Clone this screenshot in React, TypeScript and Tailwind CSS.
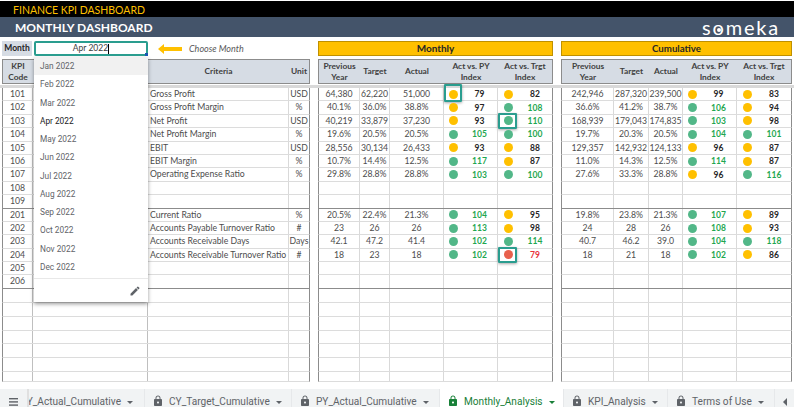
import React from "react";

type Idx = { c: "y" | "g" | "r"; v: number; box?: string };

const y = (v: number): Idx => ({ c: "y", v });
const g = (v: number): Idx => ({ c: "g", v });

const rows: any[] = [
  { code: 101, name: "Gross Profit", unit: "USD", m: ["64,380", "62,220", "51,000"], mi: [{ ...y(79), box: "first" }, y(82)], cu: ["242,946", "287,320", "239,500"], ci: [y(99), y(83)] },
  { code: 102, name: "Gross Profit Margin", unit: "%", m: ["40.1%", "36.0%", "38.8%"], mi: [y(97), g(108)], cu: ["36.6%", "41.2%", "38.7%"], ci: [g(106), y(94)] },
  { code: 103, name: "Net Profit", unit: "USD", m: ["40,219", "33,879", "37,230"], mi: [y(93), { ...g(110), box: "mid" }], cu: ["168,939", "179,043", "174,835"], ci: [g(103), y(98)] },
  { code: 104, name: "Net Profit Margin", unit: "%", m: ["19.6%", "20.5%", "20.5%"], mi: [g(105), g(100)], cu: ["19.7%", "20.3%", "20.5%"], ci: [g(104), g(101)] },
  { code: 105, name: "EBIT", unit: "USD", m: ["28,556", "30,134", "26,433"], mi: [y(93), y(88)], cu: ["129,357", "142,932", "124,133"], ci: [y(96), y(87)] },
  { code: 106, name: "EBIT Margin", unit: "%", m: ["10.7%", "14.4%", "12.5%"], mi: [g(117), y(87)], cu: ["11.0%", "14.3%", "12.5%"], ci: [g(114), y(87)] },
  { code: 107, name: "Operating Expense Ratio", unit: "%", m: ["29.8%", "28.8%", "28.8%"], mi: [g(103), g(100)], cu: ["27.6%", "33.3%", "28.8%"], ci: [y(96), g(116)] },
  { code: 108 },
  { code: 109, dark: true },
  { code: 201, name: "Current Ratio", unit: "%", m: ["20.5%", "22.4%", "21.3%"], mi: [g(104), y(95)], cu: ["19.8%", "23.8%", "21.3%"], ci: [g(107), y(89)] },
  { code: 202, name: "Accounts Payable Turnover Ratio", unit: "#", m: ["23", "26", "26"], mi: [g(113), y(98)], cu: ["24", "28", "26"], ci: [g(108), y(93)] },
  { code: 203, name: "Accounts Receivable Days", unit: "Days", m: ["42.1", "47.2", "41.4"], mi: [g(102), g(114)], cu: ["40.7", "46.2", "39.0"], ci: [g(104), g(118)] },
  { code: 204, name: "Accounts Receivable Turnover Ratio", unit: "#", m: ["18", "23", "18"], mi: [g(102), { c: "r", v: 79, box: "mid" }], cu: ["18", "21", "18"], ci: [g(102), y(86)] },
  { code: 205 },
  { code: 206, dark: true },
];

const months = ["Jan 2022", "Feb 2022", "Mar 2022", "Apr 2022", "May 2022", "Jun 2022", "Jul 2022", "Aug 2022", "Sep 2022", "Oct 2022", "Nov 2022", "Dec 2022"];

function Highlight({ kind }: { kind: string }) {
  return (
    <span
      className={
        kind === "first"
          ? "absolute left-0 -top-[4px] w-[18px] h-[18px] border-2 border-[#2a9d8f] rounded-[1px] shadow-[0_1px_3px_rgba(0,0,0,0.35)]"
          : "absolute left-0 -top-[2px] w-[19px] h-[16px] border-2 border-[#2a9d8f] rounded-[1px] shadow-[0_1px_3px_rgba(0,0,0,0.35)]"
      }
    />
  );
}

function IndexCell({ idx, width, right }: { idx?: Idx; width: string; right?: boolean }) {
  const dot = idx?.c === "y" ? "bg-[#ffc000]" : idx?.c === "g" ? "bg-[#52b788]" : "bg-[#e8604c]";
  const txt = idx?.c === "y" ? "text-[#262626]" : idx?.c === "g" ? "text-[#1fa750]" : "text-[#e8303a]";
  return (
    <div className={`${width} relative flex items-center h-full ${right ? "" : "border-r border-[#d9d9d9]"}`}>
      {idx && (
        <>
          <span className={`${right ? "w-[20px]" : "w-[18px]"} flex justify-center`}>
            <span className={`w-[9px] h-[9px] rounded-full ${dot}`} />
          </span>
          <span className={`flex-1 text-center font-bold text-[8.5px] ${txt}`}>{idx.v}</span>
          {idx.box && <Highlight kind={idx.box} />}
        </>
      )}
    </div>
  );
}

function ValueCell({ v, width }: { v?: string; width: string }) {
  return <div className={`${width} h-full text-center border-r border-[#d9d9d9] whitespace-nowrap`}>{v}</div>;
}

function DataRow({ r, height = "h-[13.4px]" }: { r: any; height?: string }) {
  const line = r.dark ? "border-b-[#8c8c8c]" : "border-b-[#dcdcdc]";
  return (
    <div className={`flex ${height} text-[8.7px] leading-[12px] text-[#4d4d4d]`}>
      <div className={`ml-[2px] w-[308px] flex h-full border-x border-x-[#8c8c8c] border-b ${line}`}>
        <div className="w-[30px] text-center border-r border-[#bfbfbf] h-full">{r.code}</div>
        <div className="w-[115px] border-r border-[#bfbfbf] h-full" />
        <div className="w-[141px] pl-[2px] border-r border-[#d9d9d9] h-full whitespace-nowrap">{r.name}</div>
        <div className="flex-1 text-center h-full">{r.unit}</div>
      </div>
      <div className={`ml-[8px] w-[235px] flex h-full border-x border-x-[#8c8c8c] border-b ${line}`}>
        <ValueCell v={r.m?.[0]} width="w-[41px]" />
        <ValueCell v={r.m?.[1]} width="w-[30px]" />
        <ValueCell v={r.m?.[2]} width="w-[54px]" />
        <IndexCell idx={r.mi?.[0]} width="w-[54px]" />
        <IndexCell idx={r.mi?.[1]} width="flex-1" right />
      </div>
      <div className={`ml-[8px] w-[231px] flex h-full border-x border-x-[#8c8c8c] border-b ${line}`}>
        <ValueCell v={r.cu?.[0]} width="w-[52px]" />
        <ValueCell v={r.cu?.[1]} width="w-[35px]" />
        <ValueCell v={r.cu?.[2]} width="w-[34px]" />
        <IndexCell idx={r.ci?.[0]} width="w-[54px]" />
        <IndexCell idx={r.ci?.[1]} width="flex-1" right />
      </div>
    </div>
  );
}

function HeadCell({ children, width }: { children: React.ReactNode; width: string }) {
  return <div className={`${width} text-center leading-[11px]`}>{children}</div>;
}

function LockIcon() {
  return (
    <svg width="12" height="12" viewBox="0 0 24 24" fill="currentColor" className="shrink-0">
      <path d="M18 8h-1V6c0-2.76-2.24-5-5-5S7 3.24 7 6v2H6c-1.1 0-2 .9-2 2v10c0 1.1.9 2 2 2h12c1.1 0 2-.9 2-2V10c0-1.1-.9-2-2-2zm-6 9c-1.1 0-2-.9-2-2s.9-2 2-2 2 .9 2 2-.9 2-2 2zm3.1-9H8.9V6c0-1.71 1.39-3.1 3.1-3.1 1.71 0 3.1 1.39 3.1 3.1v2z" />
    </svg>
  );
}

function Tab({ label, active, width, clip }: { label: string; active?: boolean; width: string; clip?: boolean }) {
  return (
    <div
      className={`${width} h-full flex items-end overflow-hidden border-r border-[#e6e8ea] ${clip ? "justify-end pr-[11px]" : "pl-[7px]"} ${
        active ? "bg-white text-[#188038]" : "text-[#5f6368]"
      }`}
    >
      {!clip && <LockIcon />}
      <span className={`${clip ? "" : "ml-[5px]"} leading-[10px] whitespace-nowrap`}>{label}</span>
      <span className="ml-[6px] mb-[3px] w-0 h-0 border-x-[3px] border-x-transparent border-t-[3px] border-t-current shrink-0" />
    </div>
  );
}

export default function App() {
  return (
    <div className="relative w-[794px] h-[407px] overflow-hidden bg-white font-['Lato',sans-serif]">
      {/* title bars */}
      <div className="mt-px h-[16px] bg-black text-[#ffc000] text-[10.5px] leading-[18px] pl-[13px]">FINANCE KPI DASHBOARD</div>
      <div className="h-[20px] bg-[#44546a] flex items-center justify-between pl-[15px] pr-[14px] text-white">
        <span className="text-[12px] font-bold pt-[2px]">MONTHLY DASHBOARD</span>
        <span className="text-[20px] leading-[20px] tracking-[1.8px]">
          s
          <span className="relative">
            o
            <span className="absolute left-[4px] top-[13px] w-[4px] h-[4px] rounded-full bg-white" />
          </span>
          meka
        </span>
      </div>

      {/* month picker and section titles */}
      <div className="mt-[4px] h-[15px] flex text-[9.5px]">
        <div className="ml-[2px] w-[30px] bg-[#d6dce4] text-[#262626] text-[8.5px] font-bold text-center leading-[15px]">Month</div>
        <div className="ml-[2px] w-[114px] relative border-2 border-[#2a9d8f] rounded-[2px] text-center text-[8.5px] text-[#404040] leading-[11px] z-20 bg-white">
          Apr 2022<span className="inline-block w-px h-[10px] bg-black align-middle" />
          <span className="absolute -right-[2px] -bottom-[2px] w-[3px] h-[3px] bg-[#1a56b0]" />
        </div>
        <div className="w-[170px] flex items-center pl-[10px]">
          <span className="w-[18px] h-[4px] bg-[#ffc000] relative ml-[6px]">
            <span className="absolute -left-[6px] -top-[3px] w-0 h-0 border-y-[5px] border-y-transparent border-r-[6px] border-r-[#ffc000]" />
          </span>
          <span className="ml-[7px] italic text-[9px] text-[#595959]">Choose Month</span>
        </div>
        <div className="w-[235px] bg-[#ffc000] border border-[#bf9000] text-center font-bold text-[#262626] text-[10px] leading-[13px]">Monthly</div>
        <div className="ml-[8px] w-[231px] bg-[#ffc000] border border-[#bf9000] text-center font-bold text-[#262626] text-[9.7px] leading-[13px]">Cumulative</div>
      </div>

      {/* column headers */}
      <div className="mt-[3px] h-[25px] flex text-[8.4px] font-bold text-[#404040]">
        <div className="ml-[2px] w-[308px] flex items-center bg-[#d6dce4] border border-[#8c8c8c]">
          <HeadCell width="w-[30px]">KPI<br />Code</HeadCell>
          <div className="w-[115px]" />
          <HeadCell width="w-[141px]">Criteria</HeadCell>
          <HeadCell width="flex-1">Unit</HeadCell>
        </div>
        <div className="ml-[8px] w-[235px] flex items-center bg-[#d6dce4] border border-[#8c8c8c]">
          <HeadCell width="w-[41px]">Previous<br />Year</HeadCell>
          <HeadCell width="w-[30px]">Target</HeadCell>
          <HeadCell width="w-[54px]">Actual</HeadCell>
          <HeadCell width="w-[54px]">Act vs. PY<br />Index</HeadCell>
          <HeadCell width="flex-1">Act vs. Trgt<br />Index</HeadCell>
        </div>
        <div className="ml-[8px] w-[231px] flex items-center bg-[#d6dce4] border border-[#8c8c8c]">
          <HeadCell width="w-[52px]">Previous<br />Year</HeadCell>
          <HeadCell width="w-[35px]">Target</HeadCell>
          <HeadCell width="w-[34px]">Actual</HeadCell>
          <HeadCell width="w-[54px]">Act vs. PY<br />Index</HeadCell>
          <HeadCell width="flex-1">Act vs. Trgt<br />Index</HeadCell>
        </div>
      </div>
      <div className="h-[3px] mt-px bg-[#d9d9d9]" />

      {/* data grid */}
      <div>
        {rows.map((r, i) => (
          <DataRow key={i} r={r} />
        ))}
        {[0, 1, 2, 3, 4, 5].map((n) => (
          <DataRow key={n} r={{}} height="h-[13.9px]" />
        ))}
        <DataRow r={{}} height="h-[10px]" />
      </div>

      {/* month dropdown */}
      <div className="absolute left-[34px] top-[57px] w-[114px] h-[245px] bg-white shadow-[0_2px_4px_rgba(0,0,0,0.4)] z-10 font-['Roboto',sans-serif] text-[8.3px] text-[#5f6368] flex flex-col">
        {months.map((m, i) => (
          <div
            key={m}
            className={`h-[18.25px] leading-[18.25px] pl-[6px] ${i === 0 ? "bg-[#f1f1f1]" : ""} ${i === 3 ? "text-[#202124]" : ""}`}
          >
            {m}
          </div>
        ))}
        <div className="mt-[2px] border-t border-[#e8e8e8] flex-1 flex items-center justify-end pr-[7px]">
          <svg width="12" height="12" viewBox="0 0 24 24" fill="#5f6368">
            <path d="M3 17.25V21h3.75L17.81 9.94l-3.75-3.75L3 17.25zM20.71 7.04a1 1 0 0 0 0-1.41l-2.34-2.34a1 1 0 0 0-1.41 0l-1.83 1.83 3.75 3.75 1.83-1.83z" />
          </svg>
        </div>
      </div>

      {/* sheet tabs */}
      <div className="absolute left-0 right-0 bottom-0 h-[18px] bg-[#f1f3f4] flex text-[10.1px] font-['Roboto',sans-serif] text-[#5f6368]">
        <div className="w-[29px] flex justify-center items-end pb-px border-r-2 border-[#e0e0e0]">
          <svg width="9" height="8" viewBox="0 0 9 8" fill="#5f6368">
            <rect y="0" width="9" height="1.4" />
            <rect y="3.2" width="9" height="1.4" />
            <rect y="6.4" width="9" height="1.4" />
          </svg>
        </div>
        <Tab label="Y_Actual_Cumulative" width="w-[116px]" clip />
        <Tab label="CY_Target_Cumulative" width="w-[147px]" />
        <Tab label="PY_Actual_Cumulative" width="w-[148px]" />
        <Tab label="Monthly_Analysis" width="w-[124px]" active />
        <Tab label="KPI_Analysis" width="w-[104px]" />
        <Tab label="Terms of Use" width="w-[107px]" />
        <div className="flex-1 flex items-end pb-px justify-center">
          <span className="w-0 h-0 border-y-[4px] border-y-transparent border-r-[4px] border-r-[#5f6368]" />
        </div>
      </div>
    </div>
  );
}
